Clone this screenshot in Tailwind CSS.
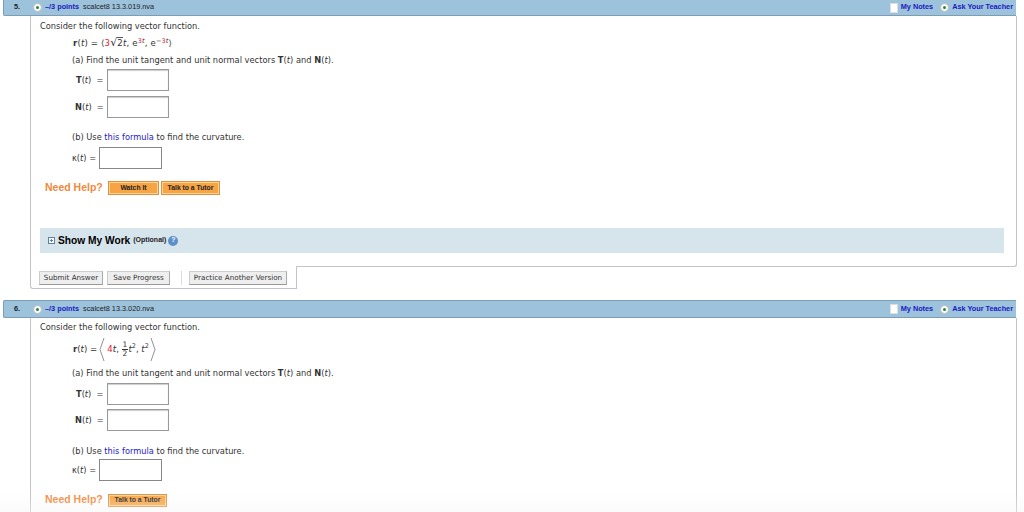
<!DOCTYPE html>
<html lang="en">
<head>
  <meta charset="UTF-8" />
  <title>Homework</title>
  <script src="https://cdn.jsdelivr.net/npm/@tailwindcss/browser@4"></script>
</head>
<body class="bg-white text-[#333] font-['DejaVu_Sans',sans-serif] text-[8.25px] h-[512px] overflow-hidden relative">

  <!-- question 5 -->
  <div class="h-[300px]">
    <div class="ml-[3px] w-[1013px] h-[16px] bg-[#9cc2dc] border-b border-l border-[#7d9db5] rounded-bl-[2px] flex items-center text-[7.3px] font-bold text-[#222] font-['Liberation_Sans',sans-serif]">
      <span class="ml-[10px] w-[19px]">5.</span>
      <span class="w-[9px] h-[9px] rounded-full bg-white border border-[#bbb] flex items-center justify-center"><span class="w-[3px] h-[3px] rounded-full bg-[#1c8a3a]"></span></span>
      <span class="ml-[3px] text-[#1a1ac0]">–/3 points</span>
      <span class="ml-[4px] font-normal">scalcet8 13.3.019.nva</span>
      <span class="ml-auto w-[8px] h-[10px] bg-white border border-[#ddd]"></span>
      <span class="ml-[3px] text-[#1a1ac0]">My Notes</span>
      <span class="ml-[7px] w-[9px] h-[9px] rounded-full bg-white border border-[#bbb] flex items-center justify-center"><span class="w-[3px] h-[3px] rounded-full bg-[#1c8a3a]"></span></span>
      <span class="ml-[3px] mr-[3px] text-[#1a1ac0]">Ask Your Teacher</span>
    </div>
    <div class="ml-[30px] w-[987px]">
      <div class="h-[246px] border-x border-[#c4c4c4] pl-[9px] flex flex-col">
        <p class="mt-[4px] h-[12px] leading-[12px]">Consider the following vector function.</p>
        <p class="mt-[5px] ml-[33px] h-[12px] leading-[12px] whitespace-nowrap text-[8.6px] tracking-[0.15px]"><b>r</b>(<i>t</i>) = ⟨<span class="text-[#e8222a]">3</span><span class="text-[11px] leading-none">√</span><span class="border-t border-[#555]">2</span><i>t</i>, e<sup class="text-[6.5px]"><span class="text-[#e8222a]">3</span><i>t</i></sup>, e<sup class="text-[6.5px]">−<span class="text-[#e8222a]">3</span><i>t</i></sup>⟩</p>
        <p class="mt-[5px] ml-[32px] h-[12px] leading-[12px] text-[8.3px]">(a) Find the unit tangent and unit normal vectors <b>T</b>(<i>t</i>) and <b>N</b>(<i>t</i>).</p>
        <div class="mt-[3px] ml-[36px] h-[22px] flex items-center">
          <span class="w-[31px] whitespace-nowrap"><b>T</b>(<i>t</i>) &nbsp;=</span>
          <span class="w-[62px] h-[22px] bg-white border border-[#999] shadow-[inset_0_1px_1px_#ccc]"></span>
        </div>
        <div class="mt-[5px] ml-[35px] h-[22px] flex items-center">
          <span class="w-[32px] whitespace-nowrap"><b>N</b>(<i>t</i>) &nbsp;=</span>
          <span class="w-[62px] h-[22px] bg-white border border-[#999] shadow-[inset_0_1px_1px_#ccc]"></span>
        </div>
        <p class="mt-[13px] ml-[32px] h-[12px] leading-[12px]">(b) Use <span class="text-[#2222cc]">this formula</span> to find the curvature.</p>
        <div class="mt-[4px] ml-[32px] h-[22px] flex items-center">
          <span class="w-[27px] whitespace-nowrap">κ(<i>t</i>) =</span>
          <span class="w-[63px] h-[22px] bg-white border border-[#888]"></span>
        </div>
        <div class="mt-[12px] ml-[5px] h-[14px] flex items-center font-['Liberation_Sans',sans-serif]">
          <span class="w-[63px] text-[10.5px] font-bold text-[#f08a3c]">Need Help?</span>
          <span class="w-[51px] h-[14px] bg-[#f7a445] border border-[#e09045] shadow-[inset_0_0_0_1px_#fcd48f] flex items-center justify-center text-[6.8px] font-bold text-[#222]">Watch It</span>
          <span class="ml-[2px] w-[59px] h-[14px] bg-[#f7a445] border border-[#e09045] shadow-[inset_0_0_0_1px_#fcd48f] flex items-center justify-center text-[6.8px] font-bold text-[#222]">Talk to a Tutor</span>
        </div>
        <div class="mt-[33px] w-[964px] h-[25px] bg-[#d6e4ec] flex items-center font-['Liberation_Sans',sans-serif] text-[#222]">
          <svg class="ml-[8px]" width="7" height="7" viewBox="0 0 7 7"><rect x="0.5" y="0.5" width="6" height="6" fill="#fff" stroke="#5a7fa8"/><path d="M2 3.5h3M3.5 2v3" stroke="#5a7fa8"/></svg>
          <b class="ml-[3px] text-[10.2px] text-black">Show My Work</b>
          <b class="ml-[3px] text-[7px]">(Optional)</b>
          <span class="ml-[2px] w-[10px] h-[10px] rounded-full bg-[#5b8fc9] text-white text-[7px] font-bold flex items-center justify-center">?</span>
        </div>
      </div>
      <div class="flex">
        <div class="w-[266px] h-[27px] border-l border-b border-[#c4c4c4] rounded-bl-[3px] pt-[9px] pl-[8px] flex items-start text-[7.2px]">
          <span class="w-[64px] h-[14px] bg-[#eee] border border-[#ccc] border-b-[#999] border-r-[#aaa] flex items-center justify-center">Submit Answer</span>
          <span class="ml-[4px] w-[63px] h-[14px] bg-[#eee] border border-[#ccc] border-b-[#999] border-r-[#aaa] flex items-center justify-center">Save Progress</span>
          <span class="ml-[11px] w-px h-[14px] bg-[#ddd]"></span>
          <span class="ml-[7px] w-[98px] h-[14px] shrink-0 bg-[#eee] border border-[#ccc] border-b-[#999] border-r-[#aaa] flex items-center justify-center">Practice Another Version</span>
        </div>
        <span class="w-px h-[23px] self-end bg-[#c4c4c4]"></span>
        <div class="flex-1 h-[5px] border-r border-b border-[#c4c4c4] rounded-br-[3px]"></div>
      </div>
    </div>
  </div>

  <!-- question 6 -->
  <div>
    <div class="ml-[3px] w-[1013px] h-[18px] bg-[#9cc2dc] border-t border-b border-l border-[#7d9db5] rounded-l-[2px] flex items-center text-[7.3px] font-bold text-[#222] font-['Liberation_Sans',sans-serif]">
      <span class="ml-[10px] w-[19px]">6.</span>
      <span class="w-[9px] h-[9px] rounded-full bg-white border border-[#bbb] flex items-center justify-center"><span class="w-[3px] h-[3px] rounded-full bg-[#1c8a3a]"></span></span>
      <span class="ml-[3px] text-[#1a1ac0]">–/3 points</span>
      <span class="ml-[4px] font-normal">scalcet8 13.3.020.nva</span>
      <span class="ml-auto w-[8px] h-[10px] bg-white border border-[#ddd]"></span>
      <span class="ml-[3px] text-[#1a1ac0]">My Notes</span>
      <span class="ml-[7px] w-[9px] h-[9px] rounded-full bg-white border border-[#bbb] flex items-center justify-center"><span class="w-[3px] h-[3px] rounded-full bg-[#1c8a3a]"></span></span>
      <span class="ml-[3px] mr-[3px] text-[#1a1ac0]">Ask Your Teacher</span>
    </div>
    <div class="ml-[30px] w-[987px] h-[194px] border-x border-[#c4c4c4] pl-[9px] flex flex-col">
      <p class="mt-[3px] h-[12px] leading-[12px]">Consider the following vector function.</p>
      <div class="mt-[3px] ml-[33px] h-[26px] flex items-center whitespace-nowrap text-[8.6px]">
        <span><b>r</b>(<i>t</i>) =</span>
        <svg class="mx-[2px]" width="6" height="25" viewBox="0 0 6 25"><polyline points="5,1 1,12.5 5,24" fill="none" stroke="#777" stroke-width="0.8"/></svg>
        <span><span class="text-[#e8222a]">4</span><i>t</i>,&nbsp;</span>
        <span class="inline-flex flex-col items-center text-[7.5px] leading-[8px]"><span class="border-b border-[#333] px-px">1</span><span>2</span></span>
        <span><i>t</i><sup class="text-[6.5px]">2</sup>, <i>t</i><sup class="text-[6.5px]">2</sup></span>
        <svg class="ml-[1px]" width="6" height="25" viewBox="0 0 6 25"><polyline points="1,1 5,12.5 1,24" fill="none" stroke="#777" stroke-width="0.8"/></svg>
      </div>
      <p class="mt-[5px] ml-[32px] h-[12px] leading-[12px] text-[8.3px]">(a) Find the unit tangent and unit normal vectors <b>T</b>(<i>t</i>) and <b>N</b>(<i>t</i>).</p>
      <div class="mt-[4px] ml-[36px] h-[22px] flex items-center">
        <span class="w-[31px] whitespace-nowrap"><b>T</b>(<i>t</i>) &nbsp;=</span>
        <span class="w-[62px] h-[22px] bg-white border border-[#999] shadow-[inset_0_1px_1px_#ccc]"></span>
      </div>
      <div class="mt-[4px] ml-[35px] h-[22px] flex items-center">
        <span class="w-[32px] whitespace-nowrap"><b>N</b>(<i>t</i>) &nbsp;=</span>
        <span class="w-[62px] h-[22px] bg-white border border-[#999] shadow-[inset_0_1px_1px_#ccc]"></span>
      </div>
      <p class="mt-[14px] ml-[32px] h-[12px] leading-[12px]">(b) Use <span class="text-[#2222cc]">this formula</span> to find the curvature.</p>
      <div class="mt-[2px] ml-[32px] h-[22px] flex items-center">
        <span class="w-[27px] whitespace-nowrap">κ(<i>t</i>) =</span>
        <span class="w-[63px] h-[22px] bg-white border border-[#888]"></span>
      </div>
      <div class="mt-[12px] ml-[5px] h-[14px] flex items-center font-['Liberation_Sans',sans-serif]">
        <span class="w-[63px] text-[10.5px] font-bold text-[#f08a3c]">Need Help?</span>
        <span class="w-[59px] h-[13px] bg-[#f7a445] border border-[#e09045] shadow-[inset_0_0_0_1px_#fcd48f] flex items-center justify-center text-[6.8px] font-bold text-[#222]">Talk to a Tutor</span>
      </div>
    </div>
  </div>

  <!-- fade over the bottom edge -->
  <div class="absolute left-0 right-0 bottom-0 h-[20px] bg-gradient-to-b from-transparent to-[#f4f4f4]/40 pointer-events-none"></div>
</body>
</html>
